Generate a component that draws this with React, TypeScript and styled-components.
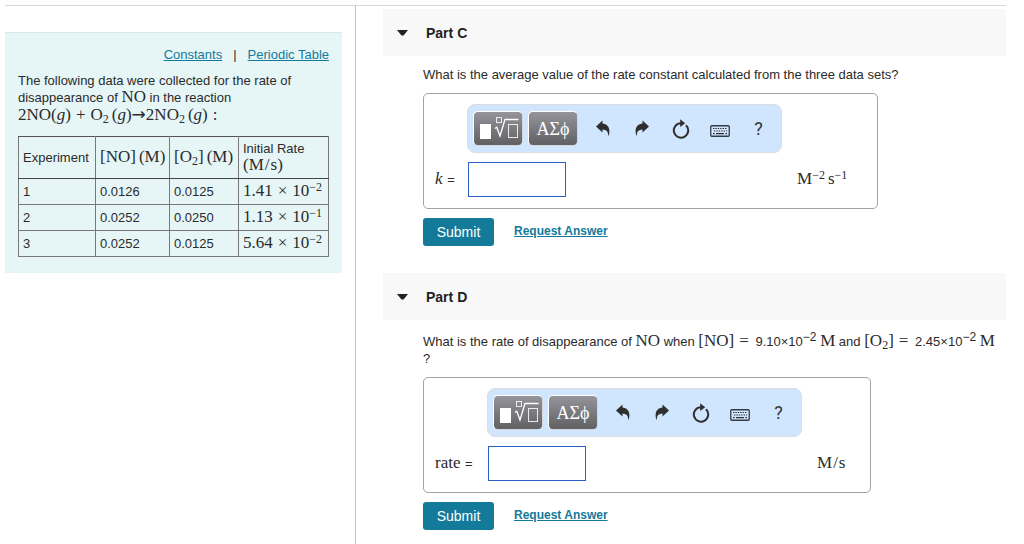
import React from "react";
import styled, { createGlobalStyle } from "styled-components";

const sans = `"Liberation Sans", Arial, sans-serif`;
const serif = `"Liberation Serif", "Times New Roman", serif`;
const teal = "#147a99";
const ink = "#2b2b2b";

const GlobalStyle = createGlobalStyle`
  *, *::before, *::after { box-sizing: border-box; }
  body {
    margin: 0;
    background: #fff;
    color: ${ink};
    font: 13px/16px ${sans};
  }
`;

const Page = styled.div`
  min-height: 100vh;
  padding: 5px 18px 0 5px;
  display: flex;
`;

const Sidebar = styled.aside`
  flex: 0 0 351px;
  border-top: 1px solid #d9d9dc;
  border-right: 1px solid #bcc3d2;
  padding: 26px 13px 0 0;
`;

const Main = styled.main`
  flex: 1;
  min-width: 0;
  border-top: 1px solid #d9d9dc;
  padding: 3px 0 0 27px;
`;

const Intro = styled.section`
  background: #e6f6f7;
  border-top: 1px solid #dfe6e7;
  padding: 14px 13px 16px;
`;

const Links = styled.nav`
  display: flex;
  justify-content: flex-end;
  gap: 11px;
`;

const Link = styled.a`
  color: ${teal};
  text-decoration: underline;
`;

const IntroText = styled.p`
  margin: 10px 0 0;
`;

const Equation = styled.p`
  margin: 1px 0 12px;
`;

const Maths = styled.span<{ $tall?: boolean }>`
  font-family: ${serif};
  font-size: 17px;
  line-height: ${(p) => (p.$tall ? "20px" : "16px")};
  white-space: nowrap;
`;

const Op = styled.span`
  margin: 0 5px;
`;

const Equals = styled.span`
  margin: 0 3px 0 5px;
`;

const Arrow = styled.span`
  font-family: "DejaVu Sans", sans-serif;
  line-height: 0;
`;

const Thin = styled.span`
  margin-left: 3px;
`;

const Slash = styled.span`
  margin: 0 1px;
`;

const Sup = styled.sup`
  font-size: 12px;
  line-height: 0;
  vertical-align: 5px;
`;

const Sub = styled.sub`
  font-size: 12px;
  line-height: 0;
  vertical-align: -3px;
`;

const DataTable = styled.table`
  width: 100%;
  table-layout: fixed;
  border-collapse: collapse;
  th,
  td {
    border: 1px solid #77797b;
    padding: 0 4px;
    height: 26px;
    text-align: left;
    font-weight: normal;
    white-space: nowrap;
  }
  thead th {
    height: 42px;
    border-top-color: #555;
    border-bottom-color: #444;
  }
`;

const Col = styled.col<{ $w?: number }>`
  width: ${(p) => (p.$w ? `${p.$w}px` : "auto")};
`;

const Part = styled.section`
  margin-bottom: 27px;
`;

const PartHeader = styled.h2`
  margin: 0;
  background: #f8f8f8;
`;

const Toggle = styled.button`
  width: 100%;
  height: 47px;
  padding: 0 14px;
  border: 0;
  background: none;
  display: flex;
  align-items: center;
  gap: 18px;
  color: #222;
  font: bold 14px/16px ${sans};
  cursor: pointer;
`;

const PartBody = styled.div`
  padding: 11px 0 0 40px;
`;

const Question = styled.p`
  margin: 0 0 10px;
`;

const AnswerBox = styled.div<{ $label: number; $unit: number }>`
  display: inline-grid;
  grid-template-columns: ${(p) => p.$label}px 315px ${(p) => p.$unit}px;
  grid-template-rows: 49px 35px;
  row-gap: 9px;
  align-items: center;
  padding: 10px 24px 11px 11px;
  border: 1px solid #a3a3a3;
  border-radius: 5px;
  vertical-align: top;
`;

const Toolbar = styled.div`
  grid-column: 2;
  align-self: stretch;
  display: flex;
  align-items: center;
  padding-left: 5px;
  background: #d0e5fe;
  border: 1px solid #dadde2;
  border-radius: 8px;
`;

const KeyButton = styled.button`
  width: 50px;
  height: 35px;
  margin-right: 5px;
  padding: 0;
  border: 1px solid #d5d7db;
  border-top-color: #fff;
  border-left-color: #fff;
  border-radius: 5px;
  background: linear-gradient(#94949b, #616163);
  color: #fff;
  font: 18px/30px ${serif};
  svg { display: block; }
`;

const ToolButton = styled.button`
  width: 39px;
  height: 35px;
  padding: 0;
  border: 0;
  background: none;
  color: #333;
  font: 18px/35px Roboto, ${sans};
  display: flex;
  align-items: center;
  justify-content: center;
`;

const FieldLabel = styled.label`
  grid-column: 1;
  white-space: nowrap;
`;

const LabelText = styled(Maths)`
  margin-right: 1px;
`;

const Field = styled.input`
  width: 98px;
  height: 35px;
  margin-left: 1px;
  padding: 0 6px;
  border: 1px solid #2860c4;
  background: #fff;
  font: 16px ${serif};
  outline: none;
`;

const Unit = styled.span`
  padding-left: 15px;
`;

const Actions = styled.div`
  margin-top: 9px;
  display: flex;
  align-items: center;
  gap: 20px;
`;

const Submit = styled.button`
  width: 71px;
  height: 28px;
  padding: 0;
  border: 0;
  border-radius: 3px;
  background: ${teal};
  color: #fff;
  font: 14px/28px ${sans};
`;

const Request = styled.a`
  color: ${teal};
  font-size: 12px;
  font-weight: bold;
  padding-bottom: 2px;
`;

const Caret = () => (
  <svg width="11" height="6" viewBox="0 0 11 6" aria-hidden="true">
    <path d="M0 0H11L6.5 5.5H4.5Z" fill="#222" />
  </svg>
);

const TemplateIcon = () => (
  <svg width="48" height="33" viewBox="1 1 48 33" fill="none" stroke="#fff" aria-hidden="true">
    <rect x="7.5" y="13.5" width="10" height="14" fill="#fff" />
    <rect x="23.5" y="6.5" width="5" height="5" strokeOpacity=".85" />
    <path d="M22 17.5L23.8 16.3L27 25L32 8.5H45.5" strokeWidth="1.3" />
    <rect x="35.5" y="13.5" width="9" height="13" strokeOpacity=".85" />
  </svg>
);

const UndoIcon = () => (
  <svg width="14" height="18" viewBox="0 0 14 18" aria-hidden="true">
    <path d="M0 6.5L6.5 0.5V3.6C11.5 4 14.8 8 12.8 15.5H12.2C12 11.5 10.5 9.8 6.5 9.6V12.5Z" fill="#2f2f2f" />
  </svg>
);

const RedoIcon = () => (
  <svg width="14" height="18" viewBox="0 0 14 18" aria-hidden="true">
    <path d="M14 6.5L7.5 0.5V3.6C2.5 4 -0.8 8 1.2 15.5H1.8C2 11.5 3.5 9.8 7.5 9.6V12.5Z" fill="#2f2f2f" />
  </svg>
);

const ResetIcon = () => (
  <svg width="18" height="20" viewBox="0 0 18 20" aria-hidden="true">
    <path d="M9 4.2A7.2 7.2 0 1 0 14 6.2" fill="none" stroke="#2f2f2f" strokeWidth="2" />
    <path d="M8.2 0.2L13.2 4.2L8.2 8Z" fill="#2f2f2f" />
  </svg>
);

const KeyboardIcon = () => (
  <svg width="20" height="16" viewBox="0 -4 20 16" aria-hidden="true">
    <rect x=".75" y=".75" width="18.5" height="10.5" rx="1" fill="none" stroke="#343c46" strokeWidth="1.3" />
    <g stroke="#2f2f2f" strokeWidth="1.2">
      <path d="M3 3.5H17" strokeDasharray="1.4 1" />
      <path d="M4 6H17" strokeDasharray="1.4 1" />
      <path d="M3 8.7H4.6M6 8.7H14M15.4 8.7H17" />
    </g>
  </svg>
);

const O2 = () => (
  <>
    O<Sub>2</Sub>
  </>
);

type PartProps = {
  id: string;
  question: React.ReactNode;
  label: React.ReactNode;
  labelWidth: number;
  unit: React.ReactNode;
  unitWidth: number;
};

const AnswerPart = ({ id, question, label, labelWidth, unit, unitWidth }: PartProps) => (
  <Part>
    <PartHeader>
      <Toggle type="button" aria-expanded="true">
        <Caret />
        Part {id}
      </Toggle>
    </PartHeader>
    <PartBody>
      <Question>{question}</Question>
      <AnswerBox $label={labelWidth} $unit={unitWidth}>
        <Toolbar role="toolbar" aria-label="Equation tools">
          <KeyButton type="button" aria-label="Templates">
            <TemplateIcon />
          </KeyButton>
          <KeyButton type="button">ΑΣϕ</KeyButton>
          <ToolButton type="button" aria-label="Undo"><UndoIcon /></ToolButton>
          <ToolButton type="button" aria-label="Redo"><RedoIcon /></ToolButton>
          <ToolButton type="button" aria-label="Reset"><ResetIcon /></ToolButton>
          <ToolButton type="button" aria-label="Keyboard"><KeyboardIcon /></ToolButton>
          <ToolButton type="button">?</ToolButton>
        </Toolbar>
        <FieldLabel htmlFor={`answer-${id}`}><LabelText>{label}</LabelText> =</FieldLabel>
        <Field id={`answer-${id}`} type="text" />
        <Unit>{unit}</Unit>
      </AnswerBox>
      <Actions>
        <Submit type="button">Submit</Submit>
        <Request href="#">Request Answer</Request>
      </Actions>
    </PartBody>
  </Part>
);

const rows = [
  ["1", "0.0126", "0.0125", "1.41", "−2"],
  ["2", "0.0252", "0.0250", "1.13", "−1"],
  ["3", "0.0252", "0.0125", "5.64", "−2"],
];

export default function App() {
  return (
    <>
      <GlobalStyle />
      <Page>
        <Sidebar>
          <Intro>
            <Links>
              <Link href="#">Constants</Link>
              <span>|</span>
              <Link href="#">Periodic Table</Link>
            </Links>
            <IntroText>
              The following data were collected for the rate of disappearance of{" "}
              <Maths>NO</Maths> in the reaction
            </IntroText>
            <Equation>
              <Maths>
                2NO(<i>g</i>)<Op>+</Op><O2 /><Thin>(<i>g</i>)</Thin><Arrow>→</Arrow>2NO<Sub>2</Sub>
                <Thin>(<i>g</i>)</Thin><Op>:</Op>
              </Maths>
            </Equation>
            <DataTable>
              <colgroup>
                <Col $w={77} />
                <Col $w={74} />
                <Col $w={69} />
                <Col />
              </colgroup>
              <thead>
                <tr>
                  <th scope="col">Experiment</th>
                  <th scope="col"><Maths>[NO]<Thin>(M)</Thin></Maths></th>
                  <th scope="col"><Maths>[<O2 />]<Thin>(M)</Thin></Maths></th>
                  <th scope="col">
                    Initial Rate
                    <br />
                    <Maths>(M<Slash>/</Slash>s)</Maths>
                  </th>
                </tr>
              </thead>
              <tbody>
                {rows.map(([n, no, o2, rate, exp]) => (
                  <tr key={n}>
                    <td>{n}</td>
                    <td>{no}</td>
                    <td>{o2}</td>
                    <td><Maths>{rate}<Op>×</Op>10<Sup>{exp}</Sup></Maths></td>
                  </tr>
                ))}
              </tbody>
            </DataTable>
          </Intro>
        </Sidebar>
        <Main>
          <AnswerPart
            id="C"
            question="What is the average value of the rate constant calculated from the three data sets?"
            label={<i>k</i>}
            labelWidth={32}
            unit={<Maths>M<Sup>−2</Sup><Thin>s<Sup>−1</Sup></Thin></Maths>}
            unitWidth={71}
          />
          <AnswerPart
            id="D"
            question={
              <>
                What is the rate of disappearance of <Maths $tall>NO</Maths> when{" "}
                <Maths $tall>[NO]<Equals>=</Equals></Maths> 9.10×10<Sup>−2</Sup> <Maths $tall>M</Maths> and{" "}
                <Maths $tall>[<O2 />]<Equals>=</Equals></Maths> 2.45×10<Sup>−2</Sup> <Maths $tall>M</Maths>
                <br />?
              </>
            }
            label="rate"
            labelWidth={52}
            unit={<Maths>M<Slash>/</Slash>s</Maths>}
            unitWidth={44}
          />
        </Main>
      </Page>
    </>
  );
}
